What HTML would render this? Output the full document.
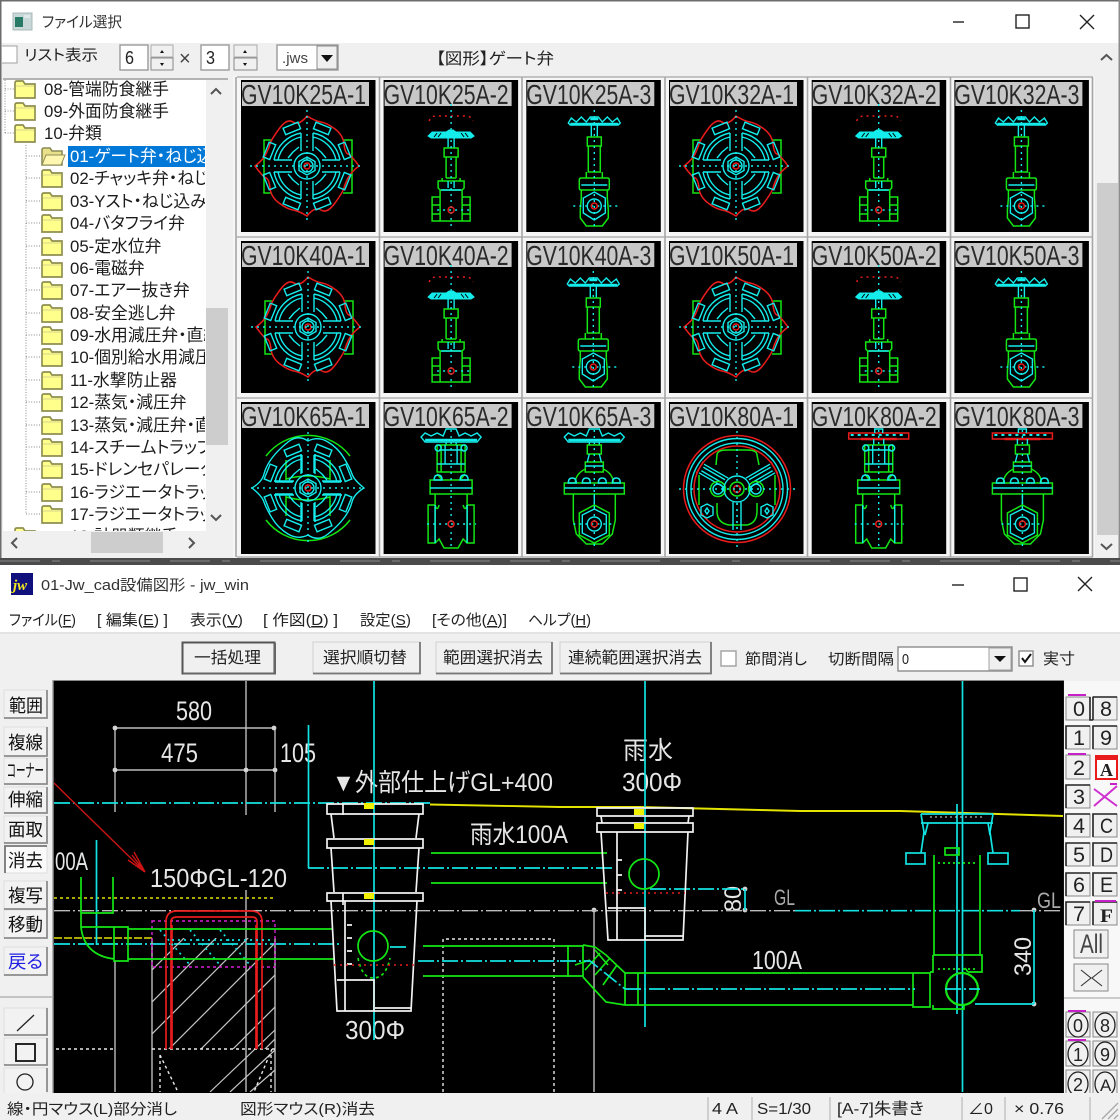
<!DOCTYPE html>
<html lang="ja"><head><meta charset="utf-8"><title>jw_win</title>
<style>
html,body{margin:0;padding:0;background:#f0f0f0;width:1120px;height:1120px;overflow:hidden}
svg{display:block;filter:blur(.35px)}
text{font-family:"Liberation Sans","Noto Sans CJK JP",sans-serif;fill:#222;font-size:15px;font-feature-settings:"palt"}
.tr{font-size:16.8px;fill:#1c1c1c}
.lb{font-size:28px;fill:#2a2a2a}
.cv{fill:#e6e6e6;font-size:27px}
.bt{font-size:18px;fill:#111}
.c{stroke:#14ecec;fill:none;stroke-width:1.4}
.g{stroke:#14e614;fill:none;stroke-width:1.5}
.r{stroke:#e81c1c;fill:none;stroke-width:1.5}
.w{stroke:#f2f2f2;fill:none;stroke-width:1.7}
.gr{stroke:#bcbcbc;fill:none;stroke-width:1.4}
.d{stroke-dasharray:2 4}
.dd{stroke-dasharray:16 3 2 3}
.cvs .c{stroke-width:1.7;stroke:#12e2e2}
.cvs .g{stroke-width:1.7}
</style></head><body>
<svg xmlns="http://www.w3.org/2000/svg" width="1120" height="1120" viewBox="0 0 1120 1120">
<defs>
<g id="fo"><path d="M1 5V3Q1 1 3 1H9L11 4H21V18H1Z" fill="#ffff8c" stroke="#8f8f50" stroke-width="1.7"/><path d="M2 6H20" fill="none" stroke="#d6d68c"/></g>
<g id="fop"><path d="M1 5V3Q1 1 3 1H9L11 4H21V18H1Z" fill="#e9e08a" stroke="#8b8b55" stroke-width="1.6"/><path d="M1 18L5 8H24L20 18Z" fill="#fff7b0" stroke="#8b8b55"/></g>
<g id="q">
<path class="c" d="M6,-33A33.5,33.5 0 0 1 33,-6M6,-29A29.5,29.5 0 0 1 29,-6M6,-33V-15M33,-6H15M8,-19L14,-14M19,-8L14,-14"/>
<rect class="c" x="-8" y="-44" width="16" height="7" transform="rotate(22)"/>
<rect class="c" x="-8" y="-44" width="16" height="7" transform="rotate(68)"/>
</g>
<g id="quads"><use href="#q"/><use href="#q" transform="rotate(90)"/><use href="#q" transform="rotate(180)"/><use href="#q" transform="rotate(270)"/></g>
<g id="hub"><circle class="c" r="13"/><path class="c" d="M0,-9L8,-4.5V4.500L0,9L-8,4.500V-4.500Z"/><circle class="c" r="6"/><circle class="r" r="3"/></g>
<g id="P">
<path class="g" d="M-36,-26H-43V27H-36M36,-26H45V27H36"/>
<path class="r" d="M0,-50Q8,-45 14,-44T28,-37T37,-22T41,-12T52,0Q44,6 41,12T37,22T28,37T14,44T0,50Q-8,45 -14,44T-28,37T-37,22T-41,12T-52,0Q-44,-6 -41,-12T-37,-22T-28,-37T-14,-44T0,-50Z"/>
<use href="#quads"/><use href="#hub"/>
<path class="c d" d="M0,-56V56M-57,0H57"/>
</g>
<g id="P65">
<path class="g" d="M-42,-32A53,53 0 0 1 42,-32M-42,32A53,53 0 0 0 42,32M-22,-28V-8M22,-28V-8M-22,28V8M22,28V8M-22,-9Q0,-15 22,-9M-22,9Q0,15 22,9"/>
<path class="c" d="M0,-47Q10,-52 20,-46T36,-30T44,-14T56,0Q46,6 44,14T36,30T20,46T0,47Q-10,52 -20,46T-36,30T-44,14T-56,0Q-46,-6 -44,-14T-36,-30T-20,-46T0,-47Z"/>
<use href="#quads"/><use href="#hub"/>
<path class="c" d="M-7,-34V-14M7,-34V-14M-7,34V14M7,34V14M-34,-7H-14M-34,7H-14M34,-7H14M34,7H14"/>
<path class="c d" d="M0,-56V56M-57,0H57"/>
</g>
<g id="P80">
<circle class="r" r="53.500"/><circle class="c" r="50.500"/><circle class="c" r="46"/><circle class="r" r="43"/>
<path class="g" d="M-20,-34Q-20,-39 -10,-39H10Q20,-39 20,-34L22,-24M-21,-24L-20,-34M-38,-14V16M38,-14V16M-20,14V22Q-20,34 -8,36H10Q20,34 20,22V14"/>
<path class="c" d="M-4,13V41M4,13V41"/><path class="c d" d="M0,14V40"/>
<g transform="rotate(120)"><path class="c" d="M-5,13V41M5,13V41M-2,15V40M2,15V40"/><path class="r" d="M-7,43H7"/></g>
<g transform="rotate(240)"><path class="c" d="M-5,13V41M5,13V41M-2,15V40M2,15V40"/><path class="r" d="M-7,43H7"/></g>
<circle class="c" cx="-19" cy="0" r="5"/><circle class="g" cx="-19" cy="0" r="7.500"/>
<circle class="c" cx="19" cy="0" r="5"/><circle class="g" cx="19" cy="0" r="7.500"/>
<path class="c" d="M-30,15L-24,18V26L-30,29L-36,26V18Z M-30,19L-28,22L-30,25L-32,22Z M30,15L36,18V26L30,29L24,26V18Z M30,19L32,22L30,25L28,22Z"/>
<circle class="c" r="13" stroke-width="1.600"/><circle class="g" r="7"/><circle class="r" r="3.500"/>
<path class="c d" d="M0,-58V58M-58,0H58"/>
</g>
<g id="S">
<path class="r d" d="M-22,41Q-20,36 -15,36H15Q20,36 22,41"/>
<path fill="#14ecec" stroke="#14ecec" d="M-23,56L-19,52H-5L-2,50H2L5,52H19L23,56L20,58H-20Z"/>
<path stroke="#000" stroke-width="1" d="M-14,53L-17,57M-10,53L-13,57M10,53L13,57M14,53L17,57"/>
<path class="c" d="M-3,58V68M3,58V68"/>
<path class="g" d="M-7,68H7V77H-7ZM-5,77V98M5,77V98M-5,98H5M-9,98V101H9V98M-13,108V101H13V108L11,110H-11ZM-11,110V141H11V110M-19,117H-11V141H-19ZM11,117H19V141H11ZM-19,125H-11M11,125H19M-19,134H-11M11,134H19M-5,141H5"/>
<path class="c" d="M-10,110H10M-3,101V108M3,101V108"/>
<path class="c d" d="M0,24V146M-14,130H20"/>
<circle class="r" cy="130" r="3"/>
</g>
<g id="C">
<path class="c" stroke-width="1.600" d="M-26,43L-23,38L-18,42L-13,37L-8,42L-4,37H4L8,42L13,37L18,42L23,38L26,43L24,45H-24Z"/>
<path stroke="#14ecec" stroke-width="2.500" d="M-24,44H24M-4,39H4"/>
<path class="c" d="M-3,45V57M3,45V57"/>
<path class="g" d="M-7,57H7V66H-7ZM-6,66V92H6V66M-8,92V98H8V92M-15,108V100Q-15,98 -13,98H13Q15,98 15,100V108Q15,110 13,110H-13Q-15,110 -15,108ZM-13,110V118L-14,130V138L-8,146H8L14,138V130L13,118V110"/>
<path class="c" d="M-13,105H13"/>
<path class="c" d="M0,112L11,118V133L0,140L-11,133V118Z"/><circle class="c" cy="126" r="7"/>
<path class="c d" d="M0,30V150M-21,126H24"/>
<circle class="r" cy="126" r="3"/>
</g>
<g id="S8">
<path class="g" d="M-14,43H14V70H-14ZM-10,43V70M10,43V70"/>
<path class="c" d="M-14,62H14M-12,48H12M-6,43V62M6,43V62"/><circle class="c" cx="-13" cy="46" r="3"/><circle class="c" cx="13" cy="46" r="3"/>
<path class="g" d="M-14,72L-9,78M14,72L9,78M-21,78H21V92H-21Z"/>
<path class="c" d="M-21,86H21M-17,78Q-17,73 -13,73T-9,78ZM9,78Q9,73 13,73T17,78Z"/>
<path class="g" d="M-16,92V103Q-14,110 -12,103M16,92V103Q14,110 12,103M-23,103H-16V141H-23ZM16,103H23V141H16ZM-16,141L-12,137L-7,146H7L12,137L16,141"/>
<path class="c" d="M16,103V141M-16,103V141"/>
<path class="c d" d="M0,28V148M-24,122H25"/>
<circle class="r" cy="122" r="3"/>
</g>
<g id="C8">
<path class="g" d="M-7,43H7V52H-7ZM-9,60H9V70H-9ZM-19,81Q-19,72 -9,67M19,81Q19,72 9,67M-30,81H30V92H-30ZM-21,92V118L-18,132L-8,142H8L18,132L21,118V92"/>
<path class="c" d="M-30,86H30M-5,52L-7,60M5,52L7,60M-9,64H9M-26,81Q-26,76 -22,76T-18,81ZM-12,81Q-12,76 -8,76T-4,81ZM4,81Q4,76 8,76T12,81ZM18,81Q18,76 22,76T26,81ZM0,92V106"/>
<path class="g" d="M0,103L15,111V133L0,141L-15,133V111Z"/>
<path class="c" d="M0,107L12,113V131L0,137L-12,131V113Z"/><circle class="c" cy="122" r="7"/>
<path class="c d" d="M0,28V145M-21,122H21"/>
<circle class="r" cy="122" r="3"/>
</g>
<g id="W8"><rect x="-30" y="31" width="60" height="6" fill="none" stroke="#e81c1c" stroke-width="1.500"/><path stroke="#14ecec" stroke-dasharray="3 4" stroke-width="2" d="M-28,33H28"/><path stroke="#e81c1c" stroke-width="2.500" d="M-18,37H18"/><path class="c" d="M-5,37V43M5,37V43M-4,31V27H4V31"/></g>
<g id="W6"><path class="c" d="M-30,35L-26,31L-20,34L-14,31L-8,34L-5,27H5L8,34L14,31L20,34L26,31L30,35L26,40H-26Z"/><path stroke="#14ecec" stroke-width="2.500" d="M-26,38H26"/><path class="c" d="M-5,40V43M5,40V43"/></g>
<clipPath id="cv"><rect x="54" y="681" width="1009" height="411"/></clipPath>
<clipPath id="tc"><rect x="3" y="80" width="202" height="451"/></clipPath>
<pattern id="hat" width="32" height="32" patternUnits="userSpaceOnUse" patternTransform="translate(152,938)"><path d="M-2,34L34,-2M-18,18L18,-18M14,50L50,14" stroke="#c4c4c4" stroke-width="1.200"/></pattern>
</defs>

<!-- WINDOW 1 -->
<rect width="1120" height="562" fill="#f0f0f0"/>
<rect y="0" width="1120" height="43" fill="#fff"/>
<rect width="1120" height="1.500" fill="#6c6c6c"/><rect width="1.500" height="562" fill="#6c6c6c"/><rect x="1118.500" width="1.500" height="562" fill="#8c8c8c"/>
<rect x="13" y="13" width="19" height="17" fill="#c8d8d8" stroke="#a8b8b8"/><rect x="15" y="17" width="8" height="10" fill="#267a66"/><rect x="24" y="15" width="6" height="3" fill="#dfe8e8"/>
<text x="42" y="27" textLength="80" lengthAdjust="spacingAndGlyphs" style="font-size:15px;fill:#333">ファイル選択</text>
<path d="M953 22H964" stroke="#222" stroke-width="1.400"/><rect x="1016" y="15" width="13" height="13" fill="none" stroke="#222" stroke-width="1.400"/><path d="M1080 15L1094 29M1094 15L1080 29" stroke="#222" stroke-width="1.400"/>

<!-- toolbar 1 -->
<path d="M2 46H17V63H2" fill="#fff" stroke="#a0a0a0"/>
<text x="24" y="60" textLength="74" lengthAdjust="spacingAndGlyphs" style="font-size:15px">リスト表示</text>
<rect x="120" y="45" width="28" height="25" fill="#fff" stroke="#9a9a9a" stroke-width="1.400"/><text x="125" y="64" style="font-size:18px" textLength="9" lengthAdjust="spacingAndGlyphs">6</text>
<rect x="151" y="45" width="22" height="12" fill="#f0f0f0" stroke="#aaa"/><rect x="151" y="58" width="22" height="12" fill="#f0f0f0" stroke="#888"/><path d="M160 53L162 50L164 53ZM160 63L162 66L164 63Z" fill="#111"/>
<text x="179" y="65" style="font-size:20px;fill:#444">×</text>
<rect x="201" y="45" width="28" height="25" fill="#fff" stroke="#9a9a9a" stroke-width="1.400"/><text x="206" y="64" style="font-size:18px" textLength="9" lengthAdjust="spacingAndGlyphs">3</text>
<rect x="234" y="45" width="23" height="12" fill="#f0f0f0" stroke="#aaa"/><rect x="234" y="58" width="23" height="12" fill="#f0f0f0" stroke="#888"/><path d="M243 53L245 50L247 53ZM243 63L245 66L247 63Z" fill="#111"/>
<rect x="277" y="45" width="61" height="25" fill="#fff" stroke="#9a9a9a" stroke-width="1.400"/><text x="282" y="63" textLength="26" lengthAdjust="spacingAndGlyphs" style="font-size:15px;fill:#444">.jws</text>
<rect x="317" y="46" width="20" height="23" fill="#f0f0f0" stroke="#8c8c8c"/><path d="M321 55H333L327 62Z" fill="#111"/>
<text x="436" y="64" textLength="118" lengthAdjust="spacingAndGlyphs" style="font-size:16px">【図形】ゲート弁</text>

<!-- tree -->
<rect x="3" y="79" width="225" height="477" fill="#f0f0f0"/>
<rect x="3" y="80" width="203" height="451" fill="#fff"/>
<path d="M3 79H228" stroke="#8e8e8e" stroke-width="1.300"/>
<g clip-path="url(#tc)">
<path d="M5 80V133M5 89H14M5 111H14M5 133H14M26 145V514M26 156H42M26 178H41M26 201H41M26 223H41M26 246H41M26 268H41M26 290H41M26 313H41M26 335H41M26 357H41M26 380H41M26 402H41M26 425H41M26 447H41M26 469H41M26 492H41M26 514H41" stroke="#888" stroke-dasharray="1 1.600" fill="none"/>
<use href="#fo" x="14" y="80"/><use href="#fo" x="14" y="102"/><use href="#fo" x="14" y="124"/>
<use href="#fop" x="41" y="147"/><use href="#fo" x="41" y="169"/><use href="#fo" x="41" y="192"/><use href="#fo" x="41" y="214"/><use href="#fo" x="41" y="237"/><use href="#fo" x="41" y="259"/><use href="#fo" x="41" y="281"/><use href="#fo" x="41" y="304"/><use href="#fo" x="41" y="326"/><use href="#fo" x="41" y="348"/><use href="#fo" x="41" y="371"/><use href="#fo" x="41" y="393"/><use href="#fo" x="41" y="416"/><use href="#fo" x="41" y="438"/><use href="#fo" x="41" y="460"/><use href="#fo" x="41" y="483"/><use href="#fo" x="41" y="505"/><use href="#fo" x="14" y="527"/>
<text class="tr" x="44" y="95">08-管端防食継手</text>
<text class="tr" x="44" y="117">09-外面防食継手</text>
<text class="tr" x="44" y="139">10-弁類</text>
<rect x="68" y="146" width="137" height="21" fill="#0078d7"/>
<text class="tr" x="70" y="162" style="fill:#fff">01-ゲート弁・ねじ込み</text>
<text class="tr" x="70" y="184">02-チャッキ弁・ねじ込み</text>
<text class="tr" x="70" y="207">03-Yスト・ねじ込み</text>
<text class="tr" x="70" y="229">04-バタフライ弁</text>
<text class="tr" x="70" y="252">05-定水位弁</text>
<text class="tr" x="70" y="274">06-電磁弁</text>
<text class="tr" x="70" y="296">07-エアー抜き弁</text>
<text class="tr" x="70" y="319">08-安全逃し弁</text>
<text class="tr" x="70" y="341">09-水用減圧弁・直結</text>
<text class="tr" x="70" y="363">10-個別給水用減圧弁</text>
<text class="tr" x="70" y="386">11-水撃防止器</text>
<text class="tr" x="70" y="408">12-蒸気・減圧弁</text>
<text class="tr" x="70" y="431">13-蒸気・減圧弁・直結</text>
<text class="tr" x="70" y="453">14-スチームトラップ</text>
<text class="tr" x="70" y="475">15-ドレンセパレータ</text>
<text class="tr" x="70" y="498">16-ラジエータトラップ</text>
<text class="tr" x="70" y="520">17-ラジエータトラップ</text>
<text class="tr" x="70" y="542">18-計器類継手</text>
</g>
<rect x="206" y="308" width="22" height="137" fill="#cdcdcd"/>
<path d="M211 94L216 89L221 94" fill="none" stroke="#555" stroke-width="2"/><path d="M211 515L216 520L221 515" fill="none" stroke="#555" stroke-width="2"/>
<rect x="3" y="531" width="225" height="25" fill="#f0f0f0"/><rect x="91" y="532" width="72" height="21" fill="#cdcdcd"/>
<path d="M17 538L12 543L17 548M189 538L194 543L189 548" fill="none" stroke="#555" stroke-width="2"/>

<!-- thumbnails -->
<rect x="233" y="76" width="862" height="482" fill="#f6f6f6"/>
<path d="M237 77H1093M237 237H1093M237 398H1093M237 557H1093" stroke="#b0b0b0" stroke-width="1.400"/>
<path d="M379.500 77V557M522 77V557M665 77V557M807.500 77V557M950.500 77V557M1092.500 77V557M236 77V557" stroke="#a6a6a6" stroke-width="1.600"/>

<g transform="translate(241,80)"><rect width="134.500" height="152"/><rect x="1" y="2" width="127" height="24" fill="#c8c8c8"/><text class="lb" x="0" y="24" textLength="125" lengthAdjust="spacingAndGlyphs">GV10K25A-1</text><use href="#P" x="66" y="86"/></g>
<g transform="translate(383.600,80)"><rect width="134.500" height="152"/><rect x="1" y="2" width="127" height="24" fill="#c8c8c8"/><text class="lb" x="0" y="24" textLength="125" lengthAdjust="spacingAndGlyphs">GV10K25A-2</text><use href="#S" x="67.500"/></g>
<g transform="translate(526.300,80)"><rect width="134.500" height="152"/><rect x="1" y="2" width="127" height="24" fill="#c8c8c8"/><text class="lb" x="0" y="24" textLength="125" lengthAdjust="spacingAndGlyphs">GV10K25A-3</text><use href="#C" x="68"/></g>
<g transform="translate(669,80)"><rect width="134.500" height="152"/><rect x="1" y="2" width="127" height="24" fill="#c8c8c8"/><text class="lb" x="0" y="24" textLength="125" lengthAdjust="spacingAndGlyphs">GV10K32A-1</text><use href="#P" x="67" y="86"/></g>
<g transform="translate(811.700,80)"><rect width="134.500" height="152"/><rect x="1" y="2" width="127" height="24" fill="#c8c8c8"/><text class="lb" x="0" y="24" textLength="125" lengthAdjust="spacingAndGlyphs">GV10K32A-2</text><use href="#S" x="67"/></g>
<g transform="translate(954.400,80)"><rect width="134.500" height="152"/><rect x="1" y="2" width="127" height="24" fill="#c8c8c8"/><text class="lb" x="0" y="24" textLength="125" lengthAdjust="spacingAndGlyphs">GV10K32A-3</text><use href="#C" x="67"/></g>

<g transform="translate(241,241)"><rect width="134.500" height="152"/><rect x="1" y="2" width="127" height="24" fill="#c8c8c8"/><text class="lb" x="0" y="24" textLength="125" lengthAdjust="spacingAndGlyphs">GV10K40A-1</text><use href="#P" x="67" y="86"/></g>
<g transform="translate(383.600,241)"><rect width="134.500" height="152"/><rect x="1" y="2" width="127" height="24" fill="#c8c8c8"/><text class="lb" x="0" y="24" textLength="125" lengthAdjust="spacingAndGlyphs">GV10K40A-2</text><use href="#S" x="67.500"/></g>
<g transform="translate(526.300,241)"><rect width="134.500" height="152"/><rect x="1" y="2" width="127" height="24" fill="#c8c8c8"/><text class="lb" x="0" y="24" textLength="125" lengthAdjust="spacingAndGlyphs">GV10K40A-3</text><use href="#C" x="67"/></g>
<g transform="translate(669,241)"><rect width="134.500" height="152"/><rect x="1" y="2" width="127" height="24" fill="#c8c8c8"/><text class="lb" x="0" y="24" textLength="125" lengthAdjust="spacingAndGlyphs">GV10K50A-1</text><use href="#P" x="67" y="86"/></g>
<g transform="translate(811.700,241)"><rect width="134.500" height="152"/><rect x="1" y="2" width="127" height="24" fill="#c8c8c8"/><text class="lb" x="0" y="24" textLength="125" lengthAdjust="spacingAndGlyphs">GV10K50A-2</text><use href="#S" x="67"/></g>
<g transform="translate(954.400,241)"><rect width="134.500" height="152"/><rect x="1" y="2" width="127" height="24" fill="#c8c8c8"/><text class="lb" x="0" y="24" textLength="125" lengthAdjust="spacingAndGlyphs">GV10K50A-3</text><use href="#C" x="67"/></g>

<g transform="translate(241,402)"><rect width="134.500" height="152"/><rect x="1" y="2" width="127" height="24" fill="#c8c8c8"/><text class="lb" x="0" y="24" textLength="125" lengthAdjust="spacingAndGlyphs">GV10K65A-1</text><use href="#P65" x="67" y="86"/></g>
<g transform="translate(383.600,402)"><rect width="134.500" height="152"/><rect x="1" y="2" width="127" height="24" fill="#c8c8c8"/><text class="lb" x="0" y="24" textLength="125" lengthAdjust="spacingAndGlyphs">GV10K65A-2</text><use href="#W6" x="67.500"/><use href="#S8" x="67.500"/></g>
<g transform="translate(526.300,402)"><rect width="134.500" height="152"/><rect x="1" y="2" width="127" height="24" fill="#c8c8c8"/><text class="lb" x="0" y="24" textLength="125" lengthAdjust="spacingAndGlyphs">GV10K65A-3</text><use href="#W6" x="68"/><use href="#C8" x="68"/></g>
<g transform="translate(669,402)"><rect width="134.500" height="152"/><rect x="1" y="2" width="127" height="24" fill="#c8c8c8"/><text class="lb" x="0" y="24" textLength="125" lengthAdjust="spacingAndGlyphs">GV10K80A-1</text><use href="#P80" x="68" y="87"/></g>
<g transform="translate(811.700,402)"><rect width="134.500" height="152"/><rect x="1" y="2" width="127" height="24" fill="#c8c8c8"/><text class="lb" x="0" y="24" textLength="125" lengthAdjust="spacingAndGlyphs">GV10K80A-2</text><use href="#W8" x="67"/><use href="#S8" x="67"/></g>
<g transform="translate(954.400,402)"><rect width="134.500" height="152"/><rect x="1" y="2" width="127" height="24" fill="#c8c8c8"/><text class="lb" x="0" y="24" textLength="125" lengthAdjust="spacingAndGlyphs">GV10K80A-3</text><use href="#W8" x="68"/><use href="#C8" x="68"/></g>

<!-- main vscroll -->
<rect x="1096" y="43" width="22" height="515" fill="#f0f0f0"/><rect x="1097" y="183" width="21" height="352" fill="#cdcdcd"/>
<path d="M1101 60L1106.500 55L1112 60M1101 544L1106.500 549L1112 544" fill="none" stroke="#555" stroke-width="2"/>

<!-- separator -->
<rect y="558" width="1120" height="7" fill="#4b4b4b"/>
<path d="M0 561H1120" stroke="#8a8a8a" stroke-dasharray="40 12 8 30 60 20"/>

<!-- WINDOW 2 -->
<rect y="565" width="1120" height="555" fill="#f0f0f0"/>
<rect y="565" width="1120" height="67" fill="#fff"/>
<path d="M0 633H1120" stroke="#d8d8d8"/>
<rect x="11" y="573" width="22" height="22" fill="#10107c"/>
<text x="13" y="590" style="font:italic bold 15px 'Liberation Serif',serif;fill:#f4e820">jw</text>
<text x="41" y="590" textLength="208" lengthAdjust="spacingAndGlyphs" style="font-size:15px;fill:#333">01-Jw_cad設備図形 - jw_win</text>
<path d="M952 585H964" stroke="#222" stroke-width="1.400"/><rect x="1014" y="578" width="13" height="13" fill="none" stroke="#222" stroke-width="1.400"/><path d="M1078 577L1092 591M1092 577L1078 591" stroke="#222" stroke-width="1.400"/>
<g>
<text x="9" y="625" textLength="67" lengthAdjust="spacingAndGlyphs">ファイル(<tspan text-decoration="underline">F</tspan>)</text>
<text x="97" y="625" textLength="71" lengthAdjust="spacingAndGlyphs">[ 編集(<tspan text-decoration="underline">E</tspan>) ]</text>
<text x="190" y="625" textLength="53" lengthAdjust="spacingAndGlyphs">表示(<tspan text-decoration="underline">V</tspan>)</text>
<text x="263" y="625" textLength="75" lengthAdjust="spacingAndGlyphs">[ 作図(<tspan text-decoration="underline">D</tspan>) ]</text>
<text x="360" y="625" textLength="51" lengthAdjust="spacingAndGlyphs">設定(<tspan text-decoration="underline">S</tspan>)</text>
<text x="432" y="625" textLength="75" lengthAdjust="spacingAndGlyphs">[その他(<tspan text-decoration="underline">A</tspan>)]</text>
<text x="528" y="625" textLength="63" lengthAdjust="spacingAndGlyphs">ヘルプ(<tspan text-decoration="underline">H</tspan>)</text>
</g>
<!-- toolbar 2 -->
<g fill="#f0f0f0" stroke-width="1.300">
<rect x="182.500" y="642.500" width="92" height="31" stroke="#555" stroke-width="2"/>
<rect x="313" y="642" width="107" height="31" stroke="#d8d8d8"/>
<rect x="436" y="642" width="116" height="31" stroke="#d8d8d8"/>
<rect x="560" y="642" width="151" height="31" stroke="#d8d8d8"/>
</g>
<path d="M183 673.500H275V643" fill="none" stroke="#666" stroke-width="2"/>
<path d="M313 673.500H420V642M436 673.500H552V642M560 673.500H711V642" fill="none" stroke="#777" stroke-width="1.800"/>
<text x="194" y="663" textLength="67" lengthAdjust="spacingAndGlyphs" style="font-size:16px">一括処理</text>
<text x="323" y="663" textLength="84" lengthAdjust="spacingAndGlyphs" style="font-size:16px">選択順切替</text>
<text x="443" y="663" textLength="100" lengthAdjust="spacingAndGlyphs" style="font-size:16px">範囲選択消去</text>
<text x="568" y="663" textLength="134" lengthAdjust="spacingAndGlyphs" style="font-size:16px">連続範囲選択消去</text>
<rect x="721" y="651" width="15" height="15" fill="#fff" stroke="#a0a0a0" stroke-width="1.400"/>
<text x="745" y="664" textLength="62" lengthAdjust="spacingAndGlyphs" style="font-size:15px">節間消し</text>
<text x="828" y="664" textLength="66" lengthAdjust="spacingAndGlyphs" style="font-size:15px">切断間隔</text>
<rect x="898" y="647" width="114" height="24" fill="#fff" stroke="#8c8c8c" stroke-width="1.400"/>
<text x="902" y="664" textLength="7" lengthAdjust="spacingAndGlyphs" style="font-size:15px">0</text>
<rect x="989" y="648" width="22" height="22" fill="#f0f0f0" stroke="#a0a0a0"/><path d="M994 656H1006L1000 662Z" fill="#111"/>
<rect x="1019" y="651" width="14" height="15" fill="#fff" stroke="#8c8c8c" stroke-width="1.400"/><path d="M1022 658L1025 662L1031 654" fill="none" stroke="#111" stroke-width="2"/>
<text x="1043" y="664" textLength="32" lengthAdjust="spacingAndGlyphs" style="font-size:15.500px">実寸</text>

<!-- CANVAS -->
<rect x="53" y="680" width="1011" height="413" fill="#000"/>
<path d="M53 680.500H1064" stroke="#888"/><path d="M53 680V1093" stroke="#999" stroke-width="1.400"/>
<g clip-path="url(#cv)" class="cvs">
<path class="gr" d="M115 728H274M115 770H275M115 728V812M275 728V812M246 681V815M246 890V1092"/>
<g fill="#d4d4d4"><circle cx="115" cy="728" r="2.400"/><circle cx="274" cy="728" r="2.400"/><circle cx="115" cy="770" r="2.400"/><circle cx="246" cy="770" r="2.400"/><circle cx="275" cy="770" r="2.400"/><circle cx="594" cy="910" r="2.400"/><circle cx="1034" cy="910" r="2.400"/><circle cx="1034" cy="1004" r="2.400"/><circle cx="745" cy="889" r="2.400"/><circle cx="745" cy="910" r="2.400"/></g>
<text class="cv" x="176" y="720" textLength="36" lengthAdjust="spacingAndGlyphs">580</text>
<text class="cv" x="161" y="762" textLength="37" lengthAdjust="spacingAndGlyphs">475</text>
<text class="cv" x="280" y="762" textLength="36" lengthAdjust="spacingAndGlyphs">105</text>
<text class="cv" x="332" y="791" textLength="221" lengthAdjust="spacingAndGlyphs" style="font-size:25px">▼外部仕上げGL+400</text>
<text class="cv" x="470" y="843" textLength="98" lengthAdjust="spacingAndGlyphs" style="font-size:25px">雨水100A</text>
<text class="cv" x="55" y="870" textLength="33" lengthAdjust="spacingAndGlyphs" style="font-size:25px">00A</text>
<text class="cv" x="150" y="887" textLength="137" lengthAdjust="spacingAndGlyphs" style="font-size:26px">150ΦGL-120</text>
<text class="cv" x="345" y="1039" textLength="60" lengthAdjust="spacingAndGlyphs" style="font-size:26px">300Φ</text>
<text class="cv" x="623" y="759" textLength="50" lengthAdjust="spacingAndGlyphs" style="font-size:25px">雨水</text>
<text class="cv" x="622" y="791" textLength="60" lengthAdjust="spacingAndGlyphs" style="font-size:26px">300Φ</text>
<text class="cv" x="752" y="969" textLength="50" lengthAdjust="spacingAndGlyphs" style="font-size:26px">100A</text>
<text x="774" y="905" textLength="21" lengthAdjust="spacingAndGlyphs" style="font-size:22px;fill:#aaa">GL</text>
<text x="1037" y="908" textLength="24" lengthAdjust="spacingAndGlyphs" style="font-size:22px;fill:#aaa">GL</text>
<text class="cv" transform="translate(1031,976) rotate(-90)" textLength="39" lengthAdjust="spacingAndGlyphs" style="font-size:24px">340</text>
<text class="cv" transform="translate(741,912) rotate(-90)" textLength="26" lengthAdjust="spacingAndGlyphs" style="font-size:24px">80</text>

<path class="gr dd" d="M54 910.700H795M1020 910.700H1063"/>
<path class="c dd" d="M795 910.700H1020M54 803H430"/>
<path stroke="#e4e400" stroke-width="1.900" fill="none" d="M430 804.500L560 807H640L800 811H900L1063 816"/>
<path stroke="#e0e000" stroke-width="1.500" fill="none" stroke-dasharray="3 3" d="M54 898H275"/>
<path stroke="#e0e000" stroke-width="1.500" fill="none" stroke-dasharray="8 2" d="M54 938H152"/>
<path class="c dd" d="M54 944H340M390 947H408M418 961H560M308 868H612M650 889H745"/>
<path class="c" d="M374 681V1040M308.500 725V868M645 681V1027M962.500 681V1092M957 804V1014M96.500 840V945"/>
<path class="c" d="M745 889V910M1034 910V1004M975 1004H1034"/>
<path class="gr" d="M594 910V1092M115 961V1092M152 938V1092M275 938V1092"/>
<path stroke="#cc1414" stroke-width="1.400" fill="none" d="M54 783L145 872M132 855L145 872L128 860M134 852L145 872"/>
<rect x="152" y="938" width="123" height="111" fill="url(#hat)"/>
<path d="M210 1092L275 1030M230 1092L275 1050M250 1092L275 1070" stroke="#c4c4c4" stroke-width="1.200"/>
<path stroke="#e8e8e8" stroke-width="1.400" stroke-dasharray="3 3" fill="none" d="M56 1049H115M152 1049H275M160 1055V1092M271 1055V1092M443 1092V939H554V1092M160 1055L178 1092M272 1049L254 1092"/>
<rect x="152" y="921" width="123" height="46" fill="none" stroke="#d820d8" stroke-width="1.400" stroke-dasharray="3 3"/>
<path d="M166 1049V922Q166 911 177 911H251Q262 911 262 922V1049M171 1049V922Q171 917 177 917H252Q257 917 257 922V1049M172 1049V925M256 1049V925" stroke="#e81c1c" stroke-width="1.700" fill="none"/>
<path class="c d" d="M160 930L190 965M190 930L220 965M220 930L250 965M172 940H270"/>
<path class="g" d="M81 877V913H113V877M81 913V927H128V961H114V927M81 927Q84 955 114 959M128 929H332M128 959H335M431 853H607M431 883H607M423 946H583M423 976H583M568 945V977M583 945V977M583 945L595 947L606 955L625 973M583 977L593 988L606 1002L625 1005M595 950L608 965M590 960L575 965M600 953L585 970M610 958L595 975M617 965L603 985M625 973V1005M638 973V1005M625 973H913M625 1005H913M913 973H930V1007H913ZM934 855V955M980 855V955M933 955H982V972H968M933 955V972H930M933 1005V1009H964V1005M968 972L965 968"/>
<circle class="g" cx="962" cy="989" r="16" style="stroke-width:2.200"/>
<circle class="g" cx="373" cy="946" r="15"/>
<circle class="g" cx="644" cy="874" r="15"/>
<path class="g" stroke-dasharray="3 3" d="M358 958Q362 978 373 978Q386 978 390 958"/>
<rect class="g" x="945" y="848" width="14" height="7"/>
<path class="c dd" d="M625 989H915M945 989H980M560 961H590L625 989"/>
<path class="c" d="M921 814H993M921 823H993M921 814L924 832L921 853M993 814L990 832L993 853M928 823L925 835M988 823L990 835"/>
<rect class="c" x="906" y="853" width="19" height="11"/><rect class="c" x="988" y="853" width="20" height="11"/>
<path class="g" stroke-dasharray="2 3" d="M938 863H975M938 969H975"/>
<path stroke="#d0e8e8" stroke-dasharray="2 3" d="M930 817H985"/>
<g class="w">
<path d="M327 804H423V814H327ZM331 814L334 838M419 814L416 838M327 839H423V848H327ZM331 848L334 892M419 848L416 892M327 893H423V901H327ZM331 901L337 1011H411L417 901M345 901V1011M337 980H374V1011M375 1008H411M343 804V815M343 893V905M347 925H352M347 938H352M347 951H352M347 964H352"/>
<path d="M601 832L608 940H683L688 832M597 808H693V816H597ZM597 823H693V832H597ZM617 832V940M608 908H645V940M645 936H683M601 816L602 823M689 816L688 823M617 860H622M617 875H622M617 890H622"/>
</g>
<rect x="364" y="803" width="10" height="6" fill="#f0f000"/><rect x="364" y="839" width="10" height="6" fill="#f0f000"/><rect x="364" y="893" width="10" height="6" fill="#f0f000"/><rect x="634" y="809" width="10" height="6" fill="#f0f000"/><rect x="634" y="823" width="10" height="6" fill="#f0f000"/>
<path class="r d" d="M334 965H414M606 893H685"/>
</g>

<!-- left panel -->
<rect y="681" width="52" height="412" fill="#f0f0f0"/>
<g fill="#f2f2f2" stroke="#dedede" stroke-width="1">
<rect x="4" y="690" width="43" height="28"/><rect x="4" y="727" width="43" height="29"/><rect x="4" y="758" width="43" height="26"/><rect x="4" y="787" width="43" height="26"/><rect x="4" y="816" width="43" height="27"/><rect x="4" y="881" width="43" height="28"/><rect x="4" y="910" width="43" height="28"/><rect x="4" y="947" width="43" height="28"/><rect x="4" y="1008" width="43" height="27"/><rect x="4" y="1038" width="43" height="27"/><rect x="4" y="1068" width="43" height="28"/>
<rect x="5" y="846" width="42" height="27" fill="#fafafa"/></g>
<path fill="none" stroke="#8c8c8c" stroke-width="1.800" d="M4 718H47V690M4 756H47V727M4 784H47V758M4 813H47V787M4 843H47V816M4 909H47V881M4 938H47V910M4 975H47V947M4 1035H47V1008M4 1065H47V1038M47 1092V1068"/>
<path fill="none" stroke="#777" stroke-width="1.800" d="M5 873V846H47"/>
<g>
<text class="bt" x="9" y="712" textLength="34" lengthAdjust="spacingAndGlyphs">範囲</text>
<text class="bt" x="8" y="749" textLength="35" lengthAdjust="spacingAndGlyphs">複線</text>
<text class="bt" x="7" y="777" textLength="37" lengthAdjust="spacingAndGlyphs">コーナー</text>
<text class="bt" x="8" y="806" textLength="35" lengthAdjust="spacingAndGlyphs">伸縮</text>
<text class="bt" x="8" y="836" textLength="35" lengthAdjust="spacingAndGlyphs">面取</text>
<text class="bt" x="8" y="867" textLength="35" lengthAdjust="spacingAndGlyphs">消去</text>
<text class="bt" x="8" y="902" textLength="35" lengthAdjust="spacingAndGlyphs">複写</text>
<text class="bt" x="8" y="931" textLength="35" lengthAdjust="spacingAndGlyphs">移動</text>
<text class="bt" x="8" y="968" textLength="35" lengthAdjust="spacingAndGlyphs" style="fill:#2020e0">戻る</text>
</g>
<path d="M0 997H52" stroke="#a8a8a8" stroke-width="1.200"/>
<path d="M17 1031L34 1015" stroke="#222" stroke-width="1.300"/><rect x="16" y="1044" width="19" height="17" fill="none" stroke="#111" stroke-width="1.800"/><circle cx="25" cy="1082" r="8" fill="none" stroke="#222" stroke-width="1.300"/>

<!-- right panel -->
<rect x="1064" y="681" width="56" height="412" fill="#f8f8f8"/>
<g fill="#f0f0f0" stroke="#888" stroke-width="1">
<rect x="1066" y="697" width="24" height="23"/><rect x="1093" y="697" width="24" height="23"/>
<rect x="1066" y="726" width="24" height="23"/><rect x="1093" y="726" width="24" height="23"/>
<rect x="1066" y="755" width="24" height="24"/>
<rect x="1066" y="785" width="24" height="23"/>
<rect x="1066" y="814" width="24" height="23"/><rect x="1093" y="814" width="24" height="23"/>
<rect x="1066" y="843" width="24" height="23"/><rect x="1093" y="843" width="24" height="23"/>
<rect x="1066" y="873" width="24" height="23"/><rect x="1093" y="873" width="24" height="23"/>
<rect x="1066" y="902" width="24" height="23"/><rect x="1093" y="902" width="24" height="23"/>
<rect x="1074" y="930" width="34" height="28"/><rect x="1074" y="964" width="34" height="27"/>
<rect x="1066" y="1012" width="24" height="25"/><rect x="1093" y="1012" width="24" height="25"/>
<rect x="1066" y="1041" width="24" height="25"/><rect x="1093" y="1041" width="24" height="25"/>
<rect x="1066" y="1070" width="24" height="25"/><rect x="1093" y="1070" width="24" height="25"/>
</g>
<path fill="none" stroke="#222" stroke-width="1.600" d="M1090 697V720H1093M1092.500 697H1117M1093 720V697M1066 749V726H1090M1093 749V726H1117M1066 808V785H1090M1066 837V814H1090M1093 837V814H1117M1066 866V843H1090M1093 866V843H1117M1066 896V873H1090M1093 896V873H1117M1066 925V902H1090M1093 925V902H1117"/>
<rect x="1096" y="756" width="21" height="23" fill="#fff" stroke="#e81c1c" stroke-width="2"/><rect x="1096" y="756" width="21" height="4" fill="#e81c1c"/>
<path d="M1068 695H1086M1068 754H1086M1095 901H1116M1068 1011H1086M1068 1040H1086M1110 784H1117" stroke="#c820c8" stroke-width="2"/>
<path d="M1094 789L1117 806M1117 786L1094 806" stroke="#d030d0" stroke-width="2"/>
<g>
<text x="1073" y="716" textLength="12" lengthAdjust="spacingAndGlyphs" style="font-size:21px">0</text><text x="1100" y="716" textLength="12" lengthAdjust="spacingAndGlyphs" style="font-size:21px">8</text>
<text x="1073" y="745" textLength="12" lengthAdjust="spacingAndGlyphs" style="font-size:21px">1</text><text x="1100" y="745" textLength="12" lengthAdjust="spacingAndGlyphs" style="font-size:21px">9</text>
<text x="1073" y="775" textLength="12" lengthAdjust="spacingAndGlyphs" style="font-size:21px">2</text><text x="1100" y="776" textLength="13" lengthAdjust="spacingAndGlyphs" style="font:bold 18px 'Liberation Serif',serif">A</text>
<text x="1073" y="804" textLength="12" lengthAdjust="spacingAndGlyphs" style="font-size:21px">3</text>
<text x="1073" y="833" textLength="12" lengthAdjust="spacingAndGlyphs" style="font-size:21px">4</text><text x="1100" y="833" textLength="13" lengthAdjust="spacingAndGlyphs" style="font-size:21px">C</text>
<text x="1073" y="862" textLength="12" lengthAdjust="spacingAndGlyphs" style="font-size:21px">5</text><text x="1100" y="862" textLength="13" lengthAdjust="spacingAndGlyphs" style="font-size:21px">D</text>
<text x="1073" y="892" textLength="12" lengthAdjust="spacingAndGlyphs" style="font-size:21px">6</text><text x="1100" y="892" textLength="13" lengthAdjust="spacingAndGlyphs" style="font-size:21px">E</text>
<text x="1073" y="921" textLength="12" lengthAdjust="spacingAndGlyphs" style="font-size:21px">7</text><text x="1100" y="922" textLength="13" lengthAdjust="spacingAndGlyphs" style="font:bold 19px 'Liberation Serif',serif">F</text>
<text x="1080" y="953" textLength="23" lengthAdjust="spacingAndGlyphs" style="font-size:27px;fill:#444">All</text>
</g>
<path d="M1081 970L1091 978L1081 986M1102 970L1092 978L1102 986" fill="none" stroke="#333" stroke-width="1.100"/>
<path d="M1064 998H1120" stroke="#b0b0b0" stroke-width="1.200"/>
<g fill="none" stroke="#222" stroke-width="1.300"><ellipse cx="1078" cy="1025" rx="10" ry="12"/><ellipse cx="1105" cy="1025" rx="10" ry="12"/><ellipse cx="1078" cy="1054" rx="10" ry="12"/><ellipse cx="1105" cy="1054" rx="10" ry="12"/><ellipse cx="1078" cy="1084" rx="10" ry="12"/><ellipse cx="1105" cy="1084" rx="10" ry="12"/></g>
<g>
<text x="1073" y="1032" style="font-size:18px">0</text><text x="1100" y="1032" style="font-size:18px">8</text><text x="1073" y="1061" style="font-size:18px">1</text><text x="1100" y="1061" style="font-size:18px">9</text><text x="1073" y="1091" style="font-size:18px">2</text><text x="1100" y="1091" style="font-size:17px">A</text>
</g>
<path d="M1063.500 681V1093" stroke="#111" stroke-width="1"/>

<!-- status bar -->
<rect y="1093" width="1120" height="27" fill="#f0f0f0"/>
<text x="7" y="1114" textLength="170" lengthAdjust="spacingAndGlyphs" style="font-size:15px">線・円マウス(L)部分消し</text>
<text x="240" y="1114" textLength="135" lengthAdjust="spacingAndGlyphs" style="font-size:15px">図形マウス(R)消去</text>
<path d="M708 1097V1120M752 1097V1120M830 1097V1120M962 1097V1120M1005 1097V1120M1090 1097V1120" stroke="#c4c4c4" stroke-width="1.500"/>
<text x="712" y="1114" textLength="26" lengthAdjust="spacingAndGlyphs" style="font-size:16px">4 A</text>
<text x="757" y="1114" textLength="54" lengthAdjust="spacingAndGlyphs" style="font-size:16px">S=1/30</text>
<text x="837" y="1114" textLength="87" lengthAdjust="spacingAndGlyphs" style="font-size:16px">[A-7]朱書き</text>
<text x="968" y="1114" textLength="25" lengthAdjust="spacingAndGlyphs" style="font-size:16px">∠0</text>
<text x="1014" y="1114" textLength="50" lengthAdjust="spacingAndGlyphs" style="font-size:16px">× 0.76</text>
<path d="M1102 1119L1118 1103M1108 1119L1118 1109M1114 1119L1118 1115" stroke="#a8a8a8" stroke-width="1.300"/>
</svg>
</body></html>
